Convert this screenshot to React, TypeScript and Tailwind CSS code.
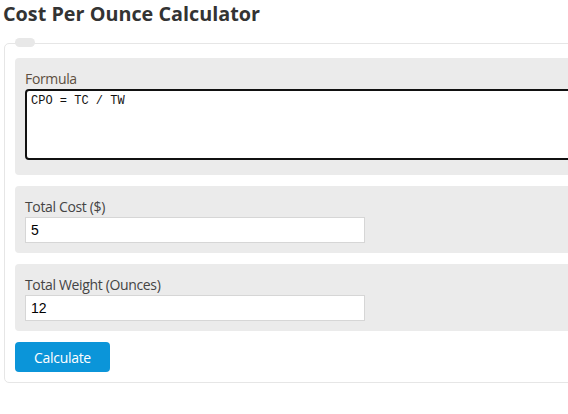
import React from "react";

const sans = { fontFamily: '"Open Sans", "Noto Sans", Arial, sans-serif' };

function Field({ label, value }: { label: string; value: string }) {
  return (
    <div className="rounded-[4px] bg-[#ebebeb] pl-[10px] pt-[11px] pb-[10px]">
      <label className="block text-[14px] leading-[20px] tracking-[-0.35px] text-[#444]">{label}</label>
      <input
        readOnly
        value={value}
        className="block h-[26px] w-[340px] border border-[#d6d6d6] bg-white px-[5px] text-[14px] text-black outline-none"
        style={{ fontFamily: '"Liberation Sans", Arial, sans-serif' }}
      />
    </div>
  );
}

export default function App() {
  return (
    <div className="w-[568px] h-[414px] overflow-hidden bg-white" style={sans}>
      <h1 className="pl-[3px] pt-[1px] text-[19.8px] font-bold leading-[25px] text-[#333]">
        Cost Per Ounce Calculator
      </h1>
      <div className="relative mt-[17px] ml-[4px] w-[640px]">
        <div className="absolute left-[11px] top-[-5px] h-[9px] w-[20px] rounded-full bg-[#e8e8e8]" />
        <div className="flex flex-col gap-[11px] rounded-[5px] border border-[#e6e6e6] pl-[10px] pt-[14px] pb-[10px]">
          <div className="rounded-[4px] bg-[#ebebeb] pl-[10px] pt-[11px] pb-[15px]">
            <label className="block text-[14px] leading-[20px] tracking-[-0.35px] text-[#5e4f40]">Formula</label>
            <textarea
              readOnly
              value="CPO = TC / TW"
              className="block h-[71px] w-full resize-none rounded-[4px] border-2 border-[#111] bg-white px-[4px] pt-[2px] text-[12px] leading-[16px] text-[#111] outline-none"
              style={{ fontFamily: '"Liberation Mono", "DejaVu Sans Mono", monospace' }}
            />
          </div>
          <Field label="Total Cost ($)" value="5" />
          <Field label="Total Weight (Ounces)" value="12" />
          <div>
            <button className="h-[30px] w-[95px] rounded-[4px] bg-[#0b95d9] text-[14px] tracking-[-0.3px] text-white">
              Calculate
            </button>
          </div>
        </div>
      </div>
    </div>
  );
}
